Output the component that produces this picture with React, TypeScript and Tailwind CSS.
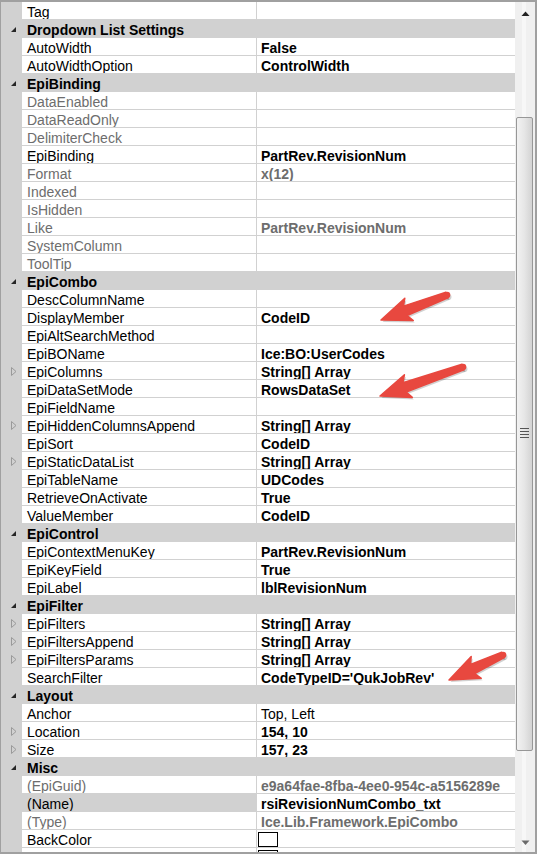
import React from 'react'

type Row = {
  label: string
  value?: string
  header?: boolean
  gray?: boolean
  plain?: boolean
  expand?: boolean
  selected?: boolean
  swatch?: boolean
}

const rows: Row[] = [
  { label: 'Tag' },
  { label: 'Dropdown List Settings', header: true },
  { label: 'AutoWidth', value: 'False' },
  { label: 'AutoWidthOption', value: 'ControlWidth' },
  { label: 'EpiBinding', header: true },
  { label: 'DataEnabled', gray: true },
  { label: 'DataReadOnly', gray: true },
  { label: 'DelimiterCheck', gray: true },
  { label: 'EpiBinding', value: 'PartRev.RevisionNum' },
  { label: 'Format', value: 'x(12)', gray: true },
  { label: 'Indexed', gray: true },
  { label: 'IsHidden', gray: true },
  { label: 'Like', value: 'PartRev.RevisionNum', gray: true },
  { label: 'SystemColumn', gray: true },
  { label: 'ToolTip', gray: true },
  { label: 'EpiCombo', header: true },
  { label: 'DescColumnName' },
  { label: 'DisplayMember', value: 'CodeID' },
  { label: 'EpiAltSearchMethod' },
  { label: 'EpiBOName', value: 'Ice:BO:UserCodes' },
  { label: 'EpiColumns', value: 'String[] Array', expand: true },
  { label: 'EpiDataSetMode', value: 'RowsDataSet' },
  { label: 'EpiFieldName' },
  { label: 'EpiHiddenColumnsAppend', value: 'String[] Array', expand: true },
  { label: 'EpiSort', value: 'CodeID' },
  { label: 'EpiStaticDataList', value: 'String[] Array', expand: true },
  { label: 'EpiTableName', value: 'UDCodes' },
  { label: 'RetrieveOnActivate', value: 'True' },
  { label: 'ValueMember', value: 'CodeID' },
  { label: 'EpiControl', header: true },
  { label: 'EpiContextMenuKey', value: 'PartRev.RevisionNum' },
  { label: 'EpiKeyField', value: 'True' },
  { label: 'EpiLabel', value: 'lblRevisionNum' },
  { label: 'EpiFilter', header: true },
  { label: 'EpiFilters', value: 'String[] Array', expand: true },
  { label: 'EpiFiltersAppend', value: 'String[] Array', expand: true },
  { label: 'EpiFiltersParams', value: 'String[] Array', expand: true },
  { label: 'SearchFilter', value: "CodeTypeID='QukJobRev'" },
  { label: 'Layout', header: true },
  { label: 'Anchor', value: 'Top, Left', plain: true },
  { label: 'Location', value: '154, 10', expand: true },
  { label: 'Size', value: '157, 23', expand: true },
  { label: 'Misc', header: true },
  { label: '(EpiGuid)', value: 'e9a64fae-8fba-4ee0-954c-a5156289e', gray: true },
  { label: '(Name)', value: 'rsiRevisionNumCombo_txt', selected: true },
  { label: '(Type)', value: 'Ice.Lib.Framework.EpiCombo', gray: true },
  { label: 'BackColor', swatch: true },
  { label: '', swatch: true },
]

const Collapse = () => (
  <svg width="7" height="7" viewBox="0 0 7 7" className="ml-[9px]">
    <path d="M6 1 L6 6 L1 6 Z" fill="#262626" />
  </svg>
)

const Expand = () => (
  <svg width="6" height="9" viewBox="0 0 6 9" className="ml-[10px]">
    <path d="M0.5 0.5 L5 4.5 L0.5 8.5 Z" fill="none" stroke="#9a9a9a" strokeWidth="1" />
  </svg>
)

const PropRow = ({ row }: { row: Row }) => {
  if (row.header) {
    return (
      <div className="flex h-[18px] items-center bg-[#d1d1d1]">
        <div className="flex w-[21px] shrink-0 items-center">
          <Collapse />
        </div>
        <div className="pt-[2px] pl-[5px] font-bold leading-[18px] text-black">{row.label}</div>
      </div>
    )
  }
  return (
    <div className="flex h-[18px]">
      <div className="flex w-[21px] shrink-0 items-center bg-[#d1d1d1]">{row.expand && <Expand />}</div>
      <div
        className={`w-[235px] shrink-0 truncate border-r border-b border-[#d1d1d1] pt-[1px] pl-[5px] leading-[18px] ${
          row.selected ? 'bg-[#d1d1d1]' : 'bg-white'
        } ${row.gray ? 'text-[#6d6d6d]' : 'text-black'}`}
      >
        {row.label}
      </div>
      <div
        className={`min-w-0 flex-1 overflow-hidden whitespace-nowrap border-b border-[#d1d1d1] bg-white pt-[1px] pl-[4px] leading-[18px] ${
          row.plain ? '' : 'font-bold'
        } ${row.gray ? 'text-[#6d6d6d]' : 'text-black'}`}
      >
        {row.swatch ? (
          <div className="mt-[1px] ml-[-3px] h-[15px] w-[20px] border border-black bg-white" />
        ) : (
          row.value
        )}
      </div>
    </div>
  )
}

const ScrollBar = () => (
  <div className="relative w-[20px] shrink-0 bg-[#f0f0f0]">
    <div className="absolute top-0 bottom-0 left-[7px] w-[4px] bg-[#f7f7f7]" />
    <svg width="9" height="6" viewBox="0 0 9 6" className="absolute top-[9px] left-[6px]">
      <path d="M4.5 0.5 L8.5 5 L0.5 5 Z" fill="#222" />
    </svg>
    <div className="absolute top-[115px] left-[1px] h-[634px] w-[17px] rounded-[2px] border border-[#979797] bg-gradient-to-r from-[#f2f2f2] via-[#e6e6e6] to-[#d3d3d3]">
      <div className="absolute top-[310px] left-[3px] flex w-[9px] flex-col gap-[2px]">
        <div className="h-[1px] bg-[#555]" />
        <div className="h-[1px] bg-[#555]" />
        <div className="h-[1px] bg-[#555]" />
        <div className="h-[1px] bg-[#555]" />
      </div>
    </div>
    <svg width="9" height="6" viewBox="0 0 9 6" className="absolute top-[838px] left-[6px]">
      <path d="M0.5 0.5 L8.5 0.5 L4.5 5 Z" fill="#6a6a6a" />
    </svg>
  </div>
)

// red call-out arrows drawn over the grid
const arrows = [
  { tail: [447, 295], tip: [381, 320] },
  { tail: [463, 367], tip: [380, 396] },
  { tail: [503, 655], tip: [449, 680] },
]

const arrowPoints = (tail: number[], tip: number[]) => {
  const dx = tip[0] - tail[0]
  const dy = tip[1] - tail[1]
  const len = Math.hypot(dx, dy)
  const ux = dx / len
  const uy = dy / len
  const px = -uy
  const py = ux
  const headLen = 30
  const headHalf = 12
  const bx = tip[0] - ux * headLen
  const by = tip[1] - uy * headLen
  const shaftEnd = 5
  const shaftStart = 3
  const pts = [
    [tail[0] + px * shaftStart, tail[1] + py * shaftStart],
    [bx + ux * 4 + px * shaftEnd, by + uy * 4 + py * shaftEnd],
    [bx + px * headHalf, by + py * headHalf],
    tip,
    [bx - px * headHalf, by - py * headHalf],
    [bx + ux * 4 - px * shaftEnd, by + uy * 4 - py * shaftEnd],
    [tail[0] - px * shaftStart, tail[1] - py * shaftStart],
  ]
  return pts.map((p) => `${p[0].toFixed(1)},${p[1].toFixed(1)}`).join(' ')
}

const Arrows = () => (
  <svg width="537" height="854" className="pointer-events-none absolute top-0 left-0">
    {arrows.map((a, i) => (
      <g key={i}>
        <polygon points={arrowPoints([a.tail[0] + 1.5, a.tail[1] + 2], [a.tip[0] + 1.5, a.tip[1] + 2])} fill="rgba(0,0,0,0.18)" />
        <circle cx={a.tail[0] + 1.5} cy={a.tail[1] + 2} r="3" fill="rgba(0,0,0,0.18)" />
        <polygon points={arrowPoints(a.tail, a.tip)} fill="#e8483f" strokeLinejoin="round" stroke="#e8483f" strokeWidth="1.5" />
        <circle cx={a.tail[0]} cy={a.tail[1]} r="3.3" fill="#e8483f" />
      </g>
    ))}
  </svg>
)

export default function App() {
  return (
    <div
      className="relative h-[854px] w-[537px] overflow-hidden bg-white text-[14px]"
      style={{ fontFamily: '"Liberation Sans", Arial, sans-serif' }}
    >
      <div className="flex h-full border-t-2 border-r-2 border-b-2 border-l border-[#a0a0a0]">
        <div className="min-w-0 flex-1 overflow-hidden">
          {rows.map((row, i) => (
            <PropRow key={i} row={row} />
          ))}
        </div>
        <ScrollBar />
      </div>
      <Arrows />
    </div>
  )
}
